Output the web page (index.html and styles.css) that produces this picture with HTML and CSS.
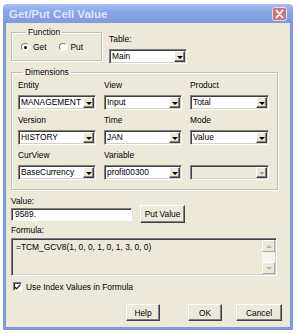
FILE: index.html
```html
<!DOCTYPE html>
<html lang="en">
<head>
    <meta charset="UTF-8">
    <title>Get/Put Cell Value</title>
    <link rel="stylesheet" href="styles.css">
</head>
<body>
    <div class="window">
        <div class="titlebar">
            <span class="title">Get/Put Cell Value</span>
            <span class="close">
                <svg width="15" height="14" viewBox="0 0 15 14">
                    <rect x="0.5" y="0.5" width="14" height="13" rx="2" fill="#c8767c" stroke="#f1d9dc"/>
                    <path d="M4.5 3.5 L10.5 10.5 M10.5 3.5 L4.5 10.5" stroke="#fff" stroke-width="1.8" stroke-linecap="round"/>
                </svg>
            </span>
        </div>
        <div class="frame">
            <div class="top-row">
                <fieldset class="group func">
                    <legend>Function</legend>
                    <div class="radios">
                        <span class="radio checked"></span><span class="radio-text">Get</span>
                        <span class="radio"></span><span class="radio-text">Put</span>
                    </div>
                </fieldset>
                <div class="table-field">
                    <div class="lbl">Table:</div>
                    <div class="combo"><span class="txt">Main</span><span class="drop"><i></i></span></div>
                </div>
            </div>

            <fieldset class="group dims">
                <legend>Dimensions</legend>
                <div class="dim-grid">
                    <div class="field">
                        <div class="lbl">Entity</div>
                        <div class="combo"><span class="txt">MANAGEMENT</span><span class="drop"><i></i></span></div>
                    </div>
                    <div class="field">
                        <div class="lbl">View</div>
                        <div class="combo"><span class="txt">Input</span><span class="drop"><i></i></span></div>
                    </div>
                    <div class="field">
                        <div class="lbl">Product</div>
                        <div class="combo"><span class="txt">Total</span><span class="drop"><i></i></span></div>
                    </div>
                    <div class="field">
                        <div class="lbl">Version</div>
                        <div class="combo"><span class="txt">HISTORY</span><span class="drop"><i></i></span></div>
                    </div>
                    <div class="field">
                        <div class="lbl">Time</div>
                        <div class="combo"><span class="txt">JAN</span><span class="drop"><i></i></span></div>
                    </div>
                    <div class="field">
                        <div class="lbl">Mode</div>
                        <div class="combo"><span class="txt">Value</span><span class="drop"><i></i></span></div>
                    </div>
                    <div class="field">
                        <div class="lbl">CurView</div>
                        <div class="combo"><span class="txt">BaseCurrency</span><span class="drop"><i></i></span></div>
                    </div>
                    <div class="field">
                        <div class="lbl">Variable</div>
                        <div class="combo"><span class="txt">profit00300</span><span class="drop"><i></i></span></div>
                    </div>
                    <div class="field">
                        <div class="lbl">&nbsp;</div>
                        <div class="combo disabled"><span class="txt"></span><span class="drop"><i></i></span></div>
                    </div>
                </div>
            </fieldset>

            <div class="lbl value-lbl">Value:</div>
            <div class="value-row">
                <div class="input">9589.</div>
                <div class="button put">Put Value</div>
            </div>

            <div class="lbl formula-lbl">Formula:</div>
            <div class="textarea">
                <div class="ta-text">=TCM_GCV8(1, 0, 0, 1, 0, 1, 3, 0, 0)</div>
                <div class="scroll">
                    <span class="sbtn"><i class="up"></i></span>
                    <span class="track"></span>
                    <span class="sbtn"><i class="down"></i></span>
                </div>
            </div>

            <div class="check-row">
                <span class="check">
                    <svg width="7" height="7" viewBox="0 0 7 7">
                        <path d="M0.5 3 L2.5 5 L6.5 1 L6.5 2.6 L2.5 6.6 L0.5 4.6 Z" fill="#000"/>
                    </svg>
                </span>
                <span>Use Index Values in Formula</span>
            </div>

            <div class="buttons">
                <div class="button help">Help</div>
                <div class="button ok">OK</div>
                <div class="button cancel">Cancel</div>
            </div>
        </div>
    </div>
</body>
</html>
```

FILE: styles.css
```css
body {
    margin: 0;
    background-color: #fff;
    font-family: "Liberation Sans", Arial, sans-serif;
    font-size: 8.4px;
    color: #000;
}
.window {
    margin: 4px 0 0 3px;
    width: 290px;
    height: 326px;
    display: flex;
    flex-direction: column;
}
.titlebar {
    height: 19px;
    display: flex;
    align-items: center;
    justify-content: space-between;
    padding: 0 6px 0 6px;
    background: linear-gradient(to bottom, #a9bff0, #8aa6e8 40%, #7d9ae2);
    border-radius: 4px 4px 0 0;
}
.title {
    font-weight: bold;
    font-size: 11.5px;
    color: #dfe7fb;
}
.close {
    display: flex;
}
.frame {
    flex: 1;
    background-color: #ece9d8;
    border: 3px solid #7e9ae2;
    border-top: none;
    padding: 4px 7px 0 5px;
}
.lbl {
    line-height: 10px;
    height: 10px;
    white-space: nowrap;
}
.group {
    margin: 0;
    padding: 0;
    border: 1px solid #c3bfae;
    box-shadow: inset 1px 1px 0 #fff, 1px 1px 0 #fff;
}
.group legend {
    padding: 0 2px;
    margin-left: 5px;
    line-height: 10px;
}
.top-row {
    display: flex;
    align-items: flex-start;
}
.func {
    width: 86px;
    box-sizing: border-box;
    padding: 5px 6px 8px 9px;
}
.radios {
    display: flex;
    align-items: center;
    height: 10px;
}
.radio {
    width: 8px;
    height: 8px;
    box-sizing: border-box;
    border-radius: 50%;
    border: 1px solid;
    border-color: #808080 #fff #fff #808080;
    background: #fff;
    display: flex;
    align-items: center;
    justify-content: center;
}
.radio.checked::after {
    content: "";
    width: 3px;
    height: 3px;
    border-radius: 50%;
    background: #000;
}
.radio-text {
    margin: 0 12px 0 4px;
}
.table-field {
    margin-left: 7px;
    padding-top: 7px;
    width: 78px;
}
.combo {
    margin-top: 5px;
    height: 15px;
    box-sizing: border-box;
    display: flex;
    border: 1px solid;
    border-color: #808080 #fff #fff #808080;
    box-shadow: inset 1px 1px 0 #404040, inset -1px -1px 0 #d4d0c8;
    background: #fff;
    padding: 1px;
}
.combo .txt {
    flex: 1;
    padding-left: 1px;
    line-height: 11px;
    overflow: hidden;
    white-space: nowrap;
}
.drop {
    width: 11px;
    box-sizing: border-box;
    background: #ece9d8;
    border: 1px solid;
    border-color: #fff #404040 #404040 #fff;
    box-shadow: inset -1px -1px 0 #808080;
    display: flex;
    align-items: center;
    justify-content: center;
}
.drop i {
    width: 0;
    height: 0;
    border-left: 3px solid transparent;
    border-right: 3px solid transparent;
    border-top: 3px solid #000;
    margin-top: 1px;
}
.combo.disabled {
    background: #ece9d8;
}
.combo.disabled .drop i {
    border-top-color: #a7a6aa;
}
.dims {
    margin-top: 3px;
    width: 267px;
    box-sizing: border-box;
    padding: 3px 6px 9px 6px;
}
.dim-grid {
    display: grid;
    grid-template-columns: 78px 78px 79px;
    column-gap: 8px;
    row-gap: 5px;
}
.field .lbl {
    line-height: 11px;
    height: 11px;
}
.field .combo {
    margin-top: 4px;
}
.value-lbl {
    margin-top: 6px;
}
.value-row {
    display: flex;
    align-items: center;
    height: 18px;
    margin-top: -1px;
}
.input {
    width: 121px;
    height: 13px;
    box-sizing: border-box;
    border: 1px solid;
    border-color: #808080 #fff #fff #808080;
    box-shadow: inset 1px 1px 0 #404040;
    background: #fff;
    padding-left: 3px;
    line-height: 11px;
}
.button {
    box-sizing: border-box;
    border: 1px solid;
    border-color: #fff #404040 #404040 #fff;
    box-shadow: inset -1px -1px 0 #808080;
    background: #ece9d8;
    display: flex;
    align-items: center;
    justify-content: center;
}
.put {
    margin-left: 8px;
    width: 45px;
    height: 18px;
}
.formula-lbl {
    margin-top: 2px;
}
.textarea {
    margin-top: 3px;
    width: 266px;
    height: 38px;
    box-sizing: border-box;
    display: flex;
    border: 1px solid;
    border-color: #808080 #fff #fff #808080;
    box-shadow: inset 1px 1px 0 #404040, inset -1px -1px 0 #d4d0c8;
    padding: 1px;
}
.ta-text {
    flex: 1;
    padding: 2px 0 0 3px;
    line-height: 10px;
}
.scroll {
    width: 13px;
    display: flex;
    flex-direction: column;
    background: #f5f4ef;
}
.sbtn {
    height: 12px;
    box-sizing: border-box;
    background: #ece9d8;
    border: 1px solid;
    border-color: #fff #a9a79c #a9a79c #fff;
    display: flex;
    align-items: center;
    justify-content: center;
}
.track {
    flex: 1;
}
.sbtn i {
    width: 0;
    height: 0;
    border-left: 3px solid transparent;
    border-right: 3px solid transparent;
}
.sbtn i.up {
    border-bottom: 3px solid #b6b5ae;
}
.sbtn i.down {
    border-top: 3px solid #b6b5ae;
}
.check-row {
    margin-top: 6px;
    display: flex;
    align-items: center;
    height: 9px;
    padding-left: 2px;
}
.check {
    width: 9px;
    height: 9px;
    box-sizing: border-box;
    border: 1px solid;
    border-color: #808080 #fff #fff #808080;
    box-shadow: inset 1px 1px 0 #404040;
    background: #fff;
    display: flex;
    align-items: center;
    justify-content: center;
    margin-right: 4px;
}
.buttons {
    margin-top: 13px;
    display: flex;
    justify-content: flex-end;
    padding-right: 1px;
}
.buttons .button {
    height: 17px;
}
.help {
    width: 34px;
}
.ok {
    width: 34px;
    margin-left: 28px;
}
.cancel {
    width: 46px;
    margin-left: 14px;
}
```
